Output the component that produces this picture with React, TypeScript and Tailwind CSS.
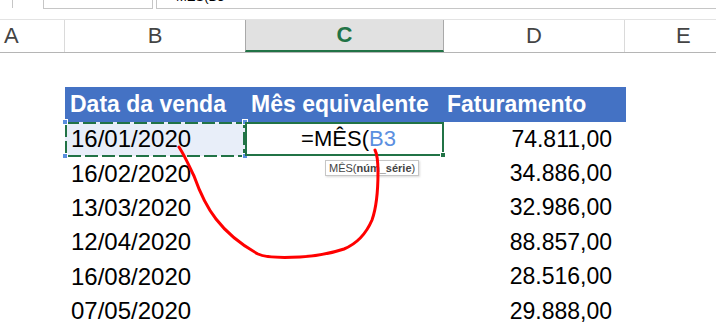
import React from "react";

const rows = [
  ["16/01/2020", "74.811,00"],
  ["16/02/2020", "34.886,00"],
  ["13/03/2020", "32.986,00"],
  ["12/04/2020", "88.857,00"],
  ["16/08/2020", "28.516,00"],
  ["07/05/2020", "29.888,00"],
];

export default function App() {
  const font = { fontFamily: '"Liberation Sans", Arial, sans-serif' };
  return (
    <div className="relative w-[716px] h-[329px] overflow-hidden bg-white text-black" style={font}>
      {/* top toolbar strip */}
      <div className="flex h-[19px] items-start">
        <div className="w-[13px] h-[8px] border-r border-[#c6c6c6]" />
        <div className="ml-[30px] w-[110px] h-[9px] border-l border-r border-b border-[#c6c6c6]" />
        <div className="ml-[3px] flex-1 h-[9px] border-l border-b border-[#c6c6c6] overflow-hidden relative">
          <span className="absolute left-[19px] top-[-9px] text-[13px] leading-[12px] text-black">MÊS(B3</span>
        </div>
      </div>

      {/* column headers */}
      <div className="flex h-[34px] border-t border-[#e3e3e3] border-b border-b-[#b5b5b5] text-[22px] leading-none text-[#444]">
        <div className="w-[65px] shrink-0 flex items-center pl-[4px] border-r border-[#dadada]">A</div>
        <div className="w-[180px] shrink-0 flex items-center justify-center">B</div>
        <div className="w-[199px] shrink-0 flex items-center justify-center bg-[#e1e1e1] border-l border-r border-[#a9a9a9] border-b-2 border-b-[#217346] text-[#217346] font-bold">C</div>
        <div className="w-[181px] shrink-0 flex items-center justify-center border-r border-[#dadada]">D</div>
        <div className="flex-1 flex items-center pl-[51px]">E</div>
      </div>

      {/* sheet body */}
      <div className="pt-[34px]">
        <div className="ml-[65px] w-[561px] h-[35px] bg-[#4472c4] flex items-center text-white font-bold text-[23px] leading-none">
          <div className="w-[180px] pl-[5px]">Data da venda</div>
          <div className="w-[199px] pl-[6px]">Mês equivalente</div>
          <div className="w-[182px] pl-[3px]">Faturamento</div>
        </div>
        {rows.map(([d, v], i) => (
          <div key={d} className="flex h-[34.4px] items-center text-[23px] leading-none">
            <div className="w-[65px] shrink-0" />
            <div
              className={
                "relative w-[180px] shrink-0 h-full flex items-center pl-[6px] text-[24px] " +
                (i === 0 ? "bg-[#e8eef9]" : "")
              }
            >
              {d}
              {i === 0 && (
                <>
                  <svg className="absolute inset-0" width="180" height="35" viewBox="0 0 180 35">
                    <rect x="1" y="1" width="178" height="33" fill="none" stroke="#217346" strokeWidth="2" strokeDasharray="13 4" />
                  </svg>
                  <span className="absolute left-[-3px] top-[-3px] w-[6px] h-[6px] bg-[#5b8fe0] border border-white" />
                  <span className="absolute right-[-3px] top-[-3px] w-[6px] h-[6px] bg-[#5b8fe0] border border-white" />
                  <span className="absolute left-[-3px] bottom-[-3px] w-[6px] h-[6px] bg-[#5b8fe0] border border-white" />
                  <span className="absolute right-[-3px] bottom-[-3px] w-[6px] h-[6px] bg-[#5b8fe0] border border-white" />
                </>
              )}
            </div>
            <div
              className={
                "relative w-[199px] shrink-0 h-full flex items-center justify-center text-[22px] " +
                (i === 0 ? "border-2 border-[#217346]" : "")
              }
            >
              {i === 0 && (
                <>
                  <span className="pl-[8px]">
                    =MÊS(<span className="text-[#5b8fe0]">B3</span>
                  </span>
                  <span className="absolute right-[-4px] bottom-[-4px] w-[6px] h-[6px] bg-[#217346] border border-white" />
                </>
              )}
            </div>
            <div className="w-[181px] shrink-0 h-full flex items-center justify-end pr-[13px]">{v}</div>
          </div>
        ))}
      </div>

      {/* tooltip */}
      <div className="absolute left-[325px] top-[160px] h-[16px] px-[3px] flex items-center bg-white border border-[#c6c6c6] shadow-[1px_1px_2px_rgba(0,0,0,0.15)] text-[11px] leading-none text-[#444]">
        MÊS(<span className="font-bold">núm_série</span>)
      </div>

      {/* red hand-drawn arrow */}
      <svg className="absolute inset-0 pointer-events-none" width="716" height="329" viewBox="0 0 716 329">
        <path
          d="M179 147 C186 158 190 168 194 176 C199 190 205 205 216 219 C226 232 240 244 258 254 C266 258 280 258 300 257 C318 256 332 253 344 249 C356 244 366 234 372 220 C377 206 378 190 378 172 C378 160 377 154 375 150"
          fill="none"
          stroke="#ff0000"
          strokeWidth="3"
          strokeLinecap="round"
          strokeLinejoin="round"
        />
      </svg>
    </div>
  );
}
